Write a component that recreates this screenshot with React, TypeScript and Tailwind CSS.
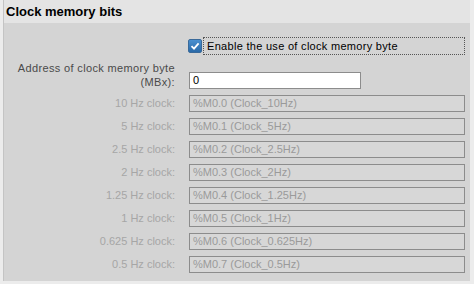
import React from "react";

const rows = [
  ["10 Hz clock:", "%M0.0 (Clock_10Hz)"],
  ["5 Hz clock:", "%M0.1 (Clock_5Hz)"],
  ["2.5 Hz clock:", "%M0.2 (Clock_2.5Hz)"],
  ["2 Hz clock:", "%M0.3 (Clock_2Hz)"],
  ["1.25 Hz clock:", "%M0.4 (Clock_1.25Hz)"],
  ["1 Hz clock:", "%M0.5 (Clock_1Hz)"],
  ["0.625 Hz clock:", "%M0.6 (Clock_0.625Hz)"],
  ["0.5 Hz clock:", "%M0.7 (Clock_0.5Hz)"],
];

export default function App() {
  return (
    <div
      className="w-[474px] h-[284px] bg-[#ececec] pl-[3px] pr-[4px] pb-[3px] overflow-hidden"
      style={{ fontFamily: '"Liberation Sans", Arial, sans-serif' }}
    >
      <div className="h-full bg-[#d4d4d4] border-l border-[#c4c4c4] flex flex-col">
        <div className="h-[23px] bg-[#e4e4e4] flex items-center pl-[2px] text-[13px] font-bold text-black">
          Clock memory bits
        </div>
        <div className="pt-[14px] pl-[184px] flex items-center">
          <div className="w-[14px] h-[14px] rounded-[2px] border border-[#3a6a9a] bg-gradient-to-b from-[#4a90d0] to-[#2a6aa8] flex items-center justify-center">
            <svg width="10" height="10" viewBox="0 0 10 10">
              <path d="M1.5 5.2 L4 7.7 L8.6 2.4" stroke="white" strokeWidth="1.8" fill="none" />
            </svg>
          </div>
          <div className="ml-[1px] h-[18px] w-[262px] border border-dotted border-[#555] flex items-center pl-[3px] text-[11px] tracking-[0.3px] text-black">
            Enable the use of clock memory byte
          </div>
        </div>
        <div className="mt-[6px] flex items-end">
          <div className="w-[171px] text-right text-[11px] leading-[14px] tracking-[0.35px] text-[#4a4a4a]">
            <div>Address of clock memory byte</div>
            <div>(MBx):</div>
          </div>
          <div className="ml-[14px] w-[172px] h-[17px] bg-white border border-[#8c8c8c] flex items-center pl-[3px] text-[11px] text-black">
            0
          </div>
        </div>
        <div className="mt-[6px] flex flex-col gap-[6px]">
          {rows.map(([l, v]) => (
            <div key={l} className="flex items-center">
              <div className="w-[171px] text-right text-[11px] text-[#a6a6a6]">{l}</div>
              <div className="ml-[14px] w-[276px] h-[17px] bg-[#d7d7d7] border border-[#8c8c8c] flex items-center pl-[3px] text-[11px] text-[#9a9a9a]">
                {v}
              </div>
            </div>
          ))}
        </div>
      </div>
    </div>
  );
}
